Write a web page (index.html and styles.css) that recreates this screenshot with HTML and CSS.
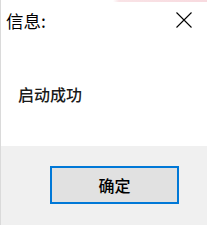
FILE: index.html
```html
<!DOCTYPE html>
<html lang="zh">
<head>
    <meta charset="UTF-8">
    <title>信息</title>
    <link rel="stylesheet" href="styles.css">
</head>
<body>
    <div class="dialog">
        <div class="edge"></div>
        <div class="head">
            <div class="title">信息:</div>
            <svg class="close" width="16" height="16" viewBox="0 0 16 16">
                <path d="M0.5 0.5L15.5 15.5M15.5 0.5L0.5 15.5" stroke="#000" stroke-width="1.1" fill="none"/>
            </svg>
        </div>
        <div class="msg">启动成功</div>
        <div class="foot">
            <button class="ok">确定</button>
        </div>
    </div>
</body>
</html>
```

FILE: styles.css
```css
body {
    margin: 0;
    background: #fff;
    font-family: "Noto Sans CJK SC", "Noto Sans", sans-serif;
}
.dialog {
    width: 207px;
    height: 225px;
    display: flex;
    flex-direction: column;
    border-left: 1px solid #dadada;
    box-sizing: border-box;
    background: #fff;
}
.edge {
    height: 2px;
    background: linear-gradient(90deg, #fff 0, #fff 112px, #f9e3e6 118px, #f8dadf 207px);
}
.head {
    height: 36px;
    display: flex;
    justify-content: space-between;
    align-items: center;
    padding: 0 15px 0 5px;
}
.title {
    font-size: 17.5px;
    color: #000;
}
.close {
    display: block;
}
.msg {
    margin-top: 46px;
    padding-left: 17px;
    font-size: 16px;
    font-weight: 500;
    line-height: 20px;
    color: #1a1a1a;
    height: 62px;
}
.foot {
    flex: 1;
    background: #f0f0f0;
    padding: 20px 0 0 49px;
}
.ok {
    width: 129px;
    height: 38px;
    border: 2px solid #0078d7;
    background: #e1e1e1;
    font-family: "Noto Sans CJK SC", sans-serif;
    font-size: 16px;
    font-weight: 500;
    color: #000;
    padding: 0;
}
```
